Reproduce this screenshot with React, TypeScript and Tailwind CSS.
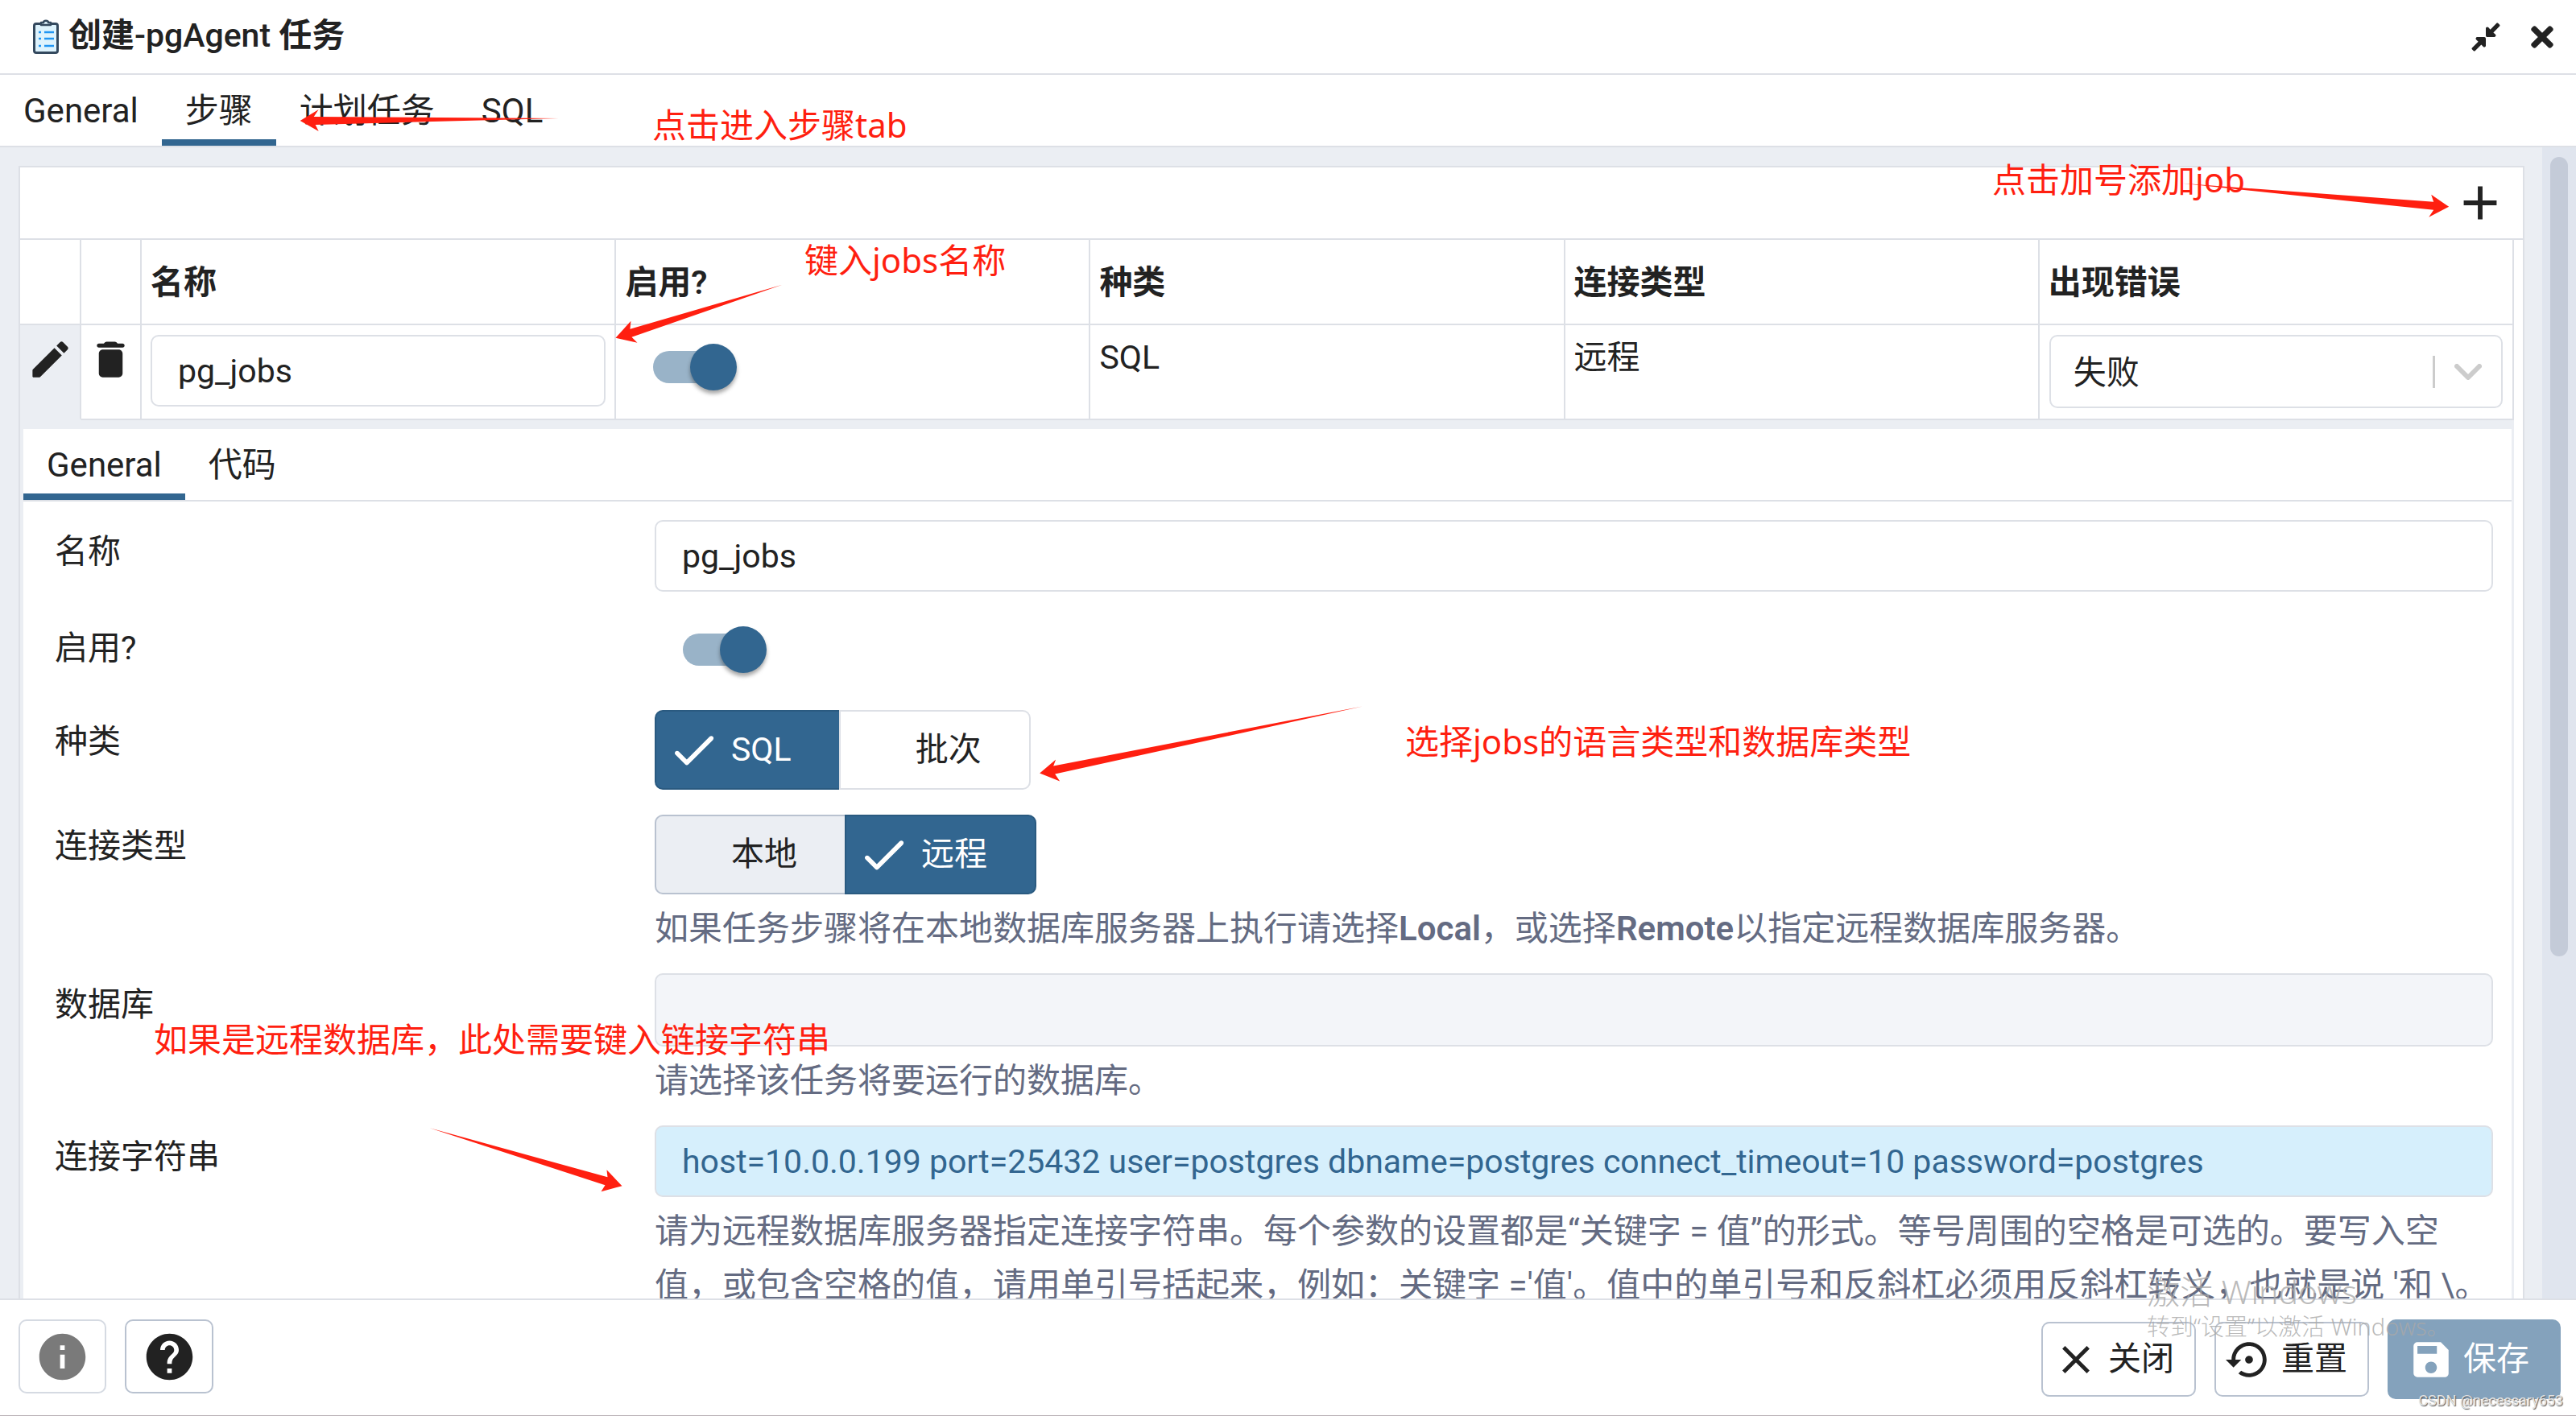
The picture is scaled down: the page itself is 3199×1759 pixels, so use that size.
import { useState } from 'react';
import type { ReactNode } from 'react';
import { MdAdd, MdClose, MdHelp, MdInfo, MdSave } from 'react-icons/md';
import { FaCompressAlt, FaTimes } from 'react-icons/fa';

const CONNECTION = 'host=10.0.0.199 port=25432 user=postgres dbname=postgres connect_timeout=10 password=postgres';

const inputClass =
  'block w-full h-[89px] rounded-[10px] border-2 border-[#dde0e6] bg-white px-8 text-[41px] text-[#222222] outline-none';

// drawn on top of the dialog: tail point, neck, barbs and tip of each arrow
const arrows = [
  '693,147 389,145 395,136 372,150 395,163 391,155',
  '971,354 782,409 783,399 764,420 791,426 784,419',
  '2711,228 3023,251 3020,242 3042,257 3017,270 3023,261',
  '1692,878 1308,952 1311,944 1291,961 1316,971 1310,962',
  '533,1402 754,1463 753,1454 772,1474 746,1481 751,1473',
];

function ClipboardIcon() {
  return (
    <svg className="w-8 h-[43px]" viewBox="0 0 32 43" fill="none">
      <rect x="1.5" y="5.500" width="29" height="36" rx="2.500" fill="#def3fd" stroke="#34495e" strokeWidth="3" />
      <path d="M10 7V4h3c0-3 6-3 6 0h3v3z" fill="#def3fd" stroke="#34495e" strokeWidth="2.500" strokeLinejoin="round" />
      <path d="M14 16h12M14 24h12M14 33h12M7 16h3M7 24h3M7 33h3" stroke="#2196f3" strokeWidth="2.500" />
    </svg>
  );
}

function EditIcon() {
  return (
    <svg className="w-[59px] h-[59px]" viewBox="0 0 24 24" fill="currentColor">
      <path d="M3 17.46v3.04c0 .28.22.5.5.5h3.04c.13 0 .26-.05.35-.15L17.81 9.94l-3.75-3.75L3.15 17.1c-.1.1-.15.22-.15.36zM20.71 7.04c.39-.39.39-1.02 0-1.41l-2.34-2.34c-.39-.39-1.02-.39-1.41 0l-1.83 1.83 3.75 3.75 1.83-1.83z" />
    </svg>
  );
}

function DeleteIcon() {
  return (
    <svg className="w-[59px] h-[59px]" viewBox="0 0 24 24" fill="currentColor">
      <path d="M6 19c0 1.1.9 2 2 2h8c1.1 0 2-.9 2-2V9c0-1.1-.9-2-2-2H8c-1.1 0-2 .9-2 2v10zM18 4h-2.5l-.71-.71c-.18-.18-.44-.29-.7-.29H9.91c-.26 0-.52.11-.7.29L8.5 4H6c-.55 0-1 .45-1 1s.45 1 1 1h12c.55 0 1-.45 1-1s-.45-1-1-1z" />
    </svg>
  );
}

function CheckIcon() {
  return (
    <svg className="w-full h-full" viewBox="0 0 24 24" fill="currentColor">
      <path d="M9 16.17 5.53 12.7c-.39-.39-1.02-.39-1.41 0s-.39 1.02 0 1.41l4.18 4.18c.39.39 1.02.39 1.41 0L20.29 7.71c.39-.39.39-1.02 0-1.41s-1.02-.39-1.41 0L9 16.17z" />
    </svg>
  );
}

function RestoreIcon() {
  return (
    <svg className="w-[58px] h-[58px]" viewBox="0 0 24 24" fill="currentColor">
      <path d="M14 12c0-1.1-.9-2-2-2s-2 .9-2 2 .9 2 2 2 2-.9 2-2zm-2-9c-4.970 0-9 4.030-9 9H0l4 4 4-4H5c0-3.870 3.130-7 7-7s7 3.130 7 7-3.130 7-7 7c-1.510 0-2.910-.49-4.060-1.300l-1.420 1.440C8.040 20.300 9.940 21 12 21c4.970 0 9-4.030 9-9s-4.030-9-9-9z" />
    </svg>
  );
}

function Tab({ active, onClick, children }: { active: boolean; onClick: () => void; children: ReactNode }) {
  return (
    <button
      type="button"
      role="tab"
      aria-selected={active}
      onClick={onClick}
      className={`px-[29px] pt-px h-[88px] text-[42px] ${active ? 'shadow-[inset_0_-8px_0_#326690]' : ''}`}
    >
      {children}
    </button>
  );
}

function Switch({ id, label, className = '' }: { id: string; label?: string; className?: string }) {
  return (
    <input
      id={id}
      type="checkbox"
      role="switch"
      defaultChecked
      aria-label={label}
      className={`block appearance-none relative w-[98px] h-10 rounded-full bg-[#99b3c8] before:absolute before:right-[-6px] before:top-[-9px] before:size-[58px] before:rounded-full before:bg-[#326690] before:shadow-[0_4px_5px_rgba(0,0,0,0.35)] ${className}`}
    />
  );
}

function Segmented({ options, value, onChange, muted }: { options: string[]; value: string; onChange: (v: string) => void; muted?: boolean }) {
  return (
    <div className="flex" role="group">
      {options.map((option) => {
        const active = option === value;
        const idle = muted ? 'bg-[#ebeef3] border-[#b9c2d0]' : 'bg-white border-[#dde0e6]';
        return (
          <button
            key={option}
            type="button"
            aria-pressed={active}
            onClick={() => onChange(option)}
            className={`flex items-center gap-3 h-[99px] pl-3 pr-[59px] border-2 text-[41px] first:rounded-l-[10px] first:border-r-0 last:rounded-r-[10px] ${
              active ? 'bg-[#326690] border-[#2a5a80] text-white' : idle
            }`}
          >
            <span className="size-[69px]">{active && <CheckIcon />}</span>
            {option}
          </button>
        );
      })}
    </div>
  );
}

function Field({ id, label, hint, children }: { id?: string; label: string; hint?: ReactNode; children: ReactNode }) {
  return (
    <div className="grid grid-cols-[1fr_3fr]">
      <label htmlFor={id} className="pl-4 pt-2 leading-[62px]">
        {label}
      </label>
      <div className={hint ? '' : 'pb-[9px]'}>
        {children}
        {hint && <p className="mt-[9px] text-[42px] leading-[67px] text-[#646b82]">{hint}</p>}
      </div>
    </div>
  );
}

function Note({ className, children }: { className: string; children: ReactNode }) {
  return <span className={`absolute whitespace-nowrap leading-[60px] text-[#ff1f10] ${className}`}>{children}</span>;
}

export default function App() {
  const [tab, setTab] = useState('步骤');
  const [stepTab, setStepTab] = useState('General');
  const [kind, setKind] = useState('SQL');
  const [connType, setConnType] = useState('远程');

  return (
    <div className="relative flex flex-col h-screen overflow-hidden bg-white border-b border-[#b9b0b5] text-[41px] text-[#222222] font-[family-name:Roboto,'Noto_Sans_CJK_SC',sans-serif]">
      <header className="flex items-center h-[93px] shrink-0 border-b-2 border-[#dde0e6] pl-[41px] pr-7">
        <ClipboardIcon />
        <h1 className="ml-3 mb-1 font-bold leading-[60px]">
          创建<span className="font-medium">-pgAgent</span> 任务
        </h1>
        <div className="ml-auto flex items-center gap-9">
          <button type="button" aria-label="还原">
            <FaCompressAlt className="size-10" />
          </button>
          <button type="button" aria-label="关闭窗口">
            <FaTimes className="w-7 h-10" />
          </button>
        </div>
      </header>

      <div className="flex h-[90px] shrink-0 border-b-2 border-[#dde0e6]" role="tablist">
        {['General', '步骤', '计划任务', 'SQL'].map((name) => (
          <Tab key={name} active={tab === name} onClick={() => setTab(name)}>
            {name}
          </Tab>
        ))}
      </div>

      <div className="flex flex-1 min-h-0 bg-[#ebeef3]">
        <main className="flex-1 min-w-0 overflow-hidden pt-[23px] pl-[23px] pr-[22px]">
          <section className="border-2 border-[#dde0e6] bg-white">
            <div className="flex items-center justify-end h-[90px] border-b-2 border-[#dde0e6] pr-[18px]">
              <button type="button" aria-label="添加">
                <MdAdd className="size-[70px]" />
              </button>
            </div>

            <div className="mr-[11px]">
              <table className="w-full table-fixed border-separate border-spacing-0 text-left">
                <colgroup>
                  <col className="w-[76px]" />
                  <col className="w-[75px]" />
                  <col />
                  <col />
                  <col />
                  <col />
                  <col />
                </colgroup>
                <thead>
                  <tr className="h-[106px]">
                    {['', '', '名称', '启用?', '种类', '连接类型', '出现错误'].map((title, i) => (
                      <th key={i} className="border-r-2 border-b-2 border-[#dde0e6] px-[11px] pt-1 font-semibold">
                        {title}
                      </th>
                    ))}
                  </tr>
                </thead>
                <tbody>
                  <tr className="h-[118px] align-top">
                    <td className="border-r-2 border-b-2 border-r-[#dde0e6] border-b-[#ebeef3] bg-[#ebeef3] pt-[13px] pl-2">
                      <button type="button" aria-label="编辑" className="block">
                        <EditIcon />
                      </button>
                    </td>
                    <td className="border-r-2 border-b-2 border-[#dde0e6] pt-[13px] pl-[7px]">
                      <button type="button" aria-label="删除" className="block">
                        <DeleteIcon />
                      </button>
                    </td>
                    <td className="border-r-2 border-b-2 border-[#dde0e6] px-[11px] pt-3">
                      <input aria-label="名称" defaultValue="pg_jobs" className={inputClass} />
                    </td>
                    <td className="border-r-2 border-b-2 border-[#dde0e6]">
                      <Switch id="row-enabled" label="启用?" className="mt-8 ml-[46px]" />
                    </td>
                    <td className="border-r-2 border-b-2 border-[#dde0e6] px-[11px] pt-3 leading-[56px]">{kind}</td>
                    <td className="border-r-2 border-b-2 border-[#dde0e6] px-[11px] pt-3 leading-[56px]">{connType}</td>
                    <td className="border-r-2 border-b-2 border-[#dde0e6] px-3 pt-3">
                      <div className="relative">
                        <select
                          aria-label="出现错误"
                          className="block w-full h-[91px] appearance-none rounded-[10px] border-2 border-[#dde0e6] bg-white pt-1 pl-7 text-[41px]"
                        >
                          <option>失败</option>
                          <option>成功</option>
                          <option>忽略</option>
                        </select>
                        <span className="absolute right-[26px] inset-y-0 flex items-center gap-6 pointer-events-none">
                          <span className="w-[3px] h-10 bg-[#cccccc]" />
                          <svg className="w-[34px] h-5" viewBox="0 0 34 20" fill="none" stroke="#cccccc" strokeWidth="6" strokeLinecap="round" strokeLinejoin="round">
                            <path d="M3 3l14 14L31 3" />
                          </svg>
                        </span>
                      </div>
                    </td>
                  </tr>
                </tbody>
              </table>

              <div className="bg-[#ebeef3] pt-[11px] pl-1 pr-[3px]">
                <div className="bg-white">
                  <div className="flex h-[90px] border-b-2 border-[#dde0e6]" role="tablist">
                    {['General', '代码'].map((name) => (
                      <Tab key={name} active={stepTab === name} onClick={() => setStepTab(name)}>
                        {name}
                      </Tab>
                    ))}
                  </div>

                  <form className="flex flex-col gap-[22px] px-[23px] pt-[23px] pb-10">
                    <Field id="name" label="名称">
                      <input id="name" defaultValue="pg_jobs" className={inputClass} />
                    </Field>
                    <Field id="enabled" label="启用?">
                      <div className="h-[85px] pt-[21px] pl-[35px]">
                        <Switch id="enabled" />
                      </div>
                    </Field>
                    <Field label="种类">
                      <Segmented options={['SQL', '批次']} value={kind} onChange={setKind} />
                    </Field>
                    <Field
                      label="连接类型"
                      hint={
                        <>
                          如果任务步骤将在本地数据库服务器上执行请选择<b className="font-semibold">Local</b>，或选择
                          <b className="font-semibold">Remote</b>以指定远程数据库服务器。
                        </>
                      }
                    >
                      <Segmented options={['本地', '远程']} value={connType} onChange={setConnType} muted />
                    </Field>
                    <Field id="database" label="数据库" hint="请选择该任务将要运行的数据库。">
                      <input id="database" disabled className="block w-full h-[91px] rounded-[10px] border-2 border-[#dde0e6] bg-[#f3f5f9]" />
                    </Field>
                    <Field
                      id="connstr"
                      label="连接字符串"
                      hint="请为远程数据库服务器指定连接字符串。每个参数的设置都是“关键字 = 值”的形式。等号周围的空格是可选的。要写入空值，或包含空格的值，请用单引号括起来，例如：关键字 ='值'。值中的单引号和反斜杠必须用反斜杠转义，也就是说 '和 \。"
                    >
                      <input
                        id="connstr"
                        defaultValue={CONNECTION}
                        className="block w-full h-[89px] rounded-[10px] border-2 border-[#dde0e6] bg-[#d6effc] px-8 text-[41px] text-[#326690] outline-none"
                      />
                    </Field>
                  </form>
                </div>
              </div>
            </div>
          </section>
        </main>

        <div className="w-[42px] shrink-0 bg-[#e0e5ee] pt-3 px-2.5">
          <div className="h-[70%] rounded-full bg-[#c4cbd8]" />
        </div>
      </div>

      <footer className="flex items-start h-[145px] shrink-0 border-t-2 border-[#dde0e6] pt-6 pl-[23px] pr-[19px]">
        <button type="button" aria-label="信息" disabled className="flex items-center justify-center w-[109px] h-[92px] rounded-[10px] border-2 border-[#d5dae2] text-[#7a7a7a]">
          <MdInfo className="size-[69px]" />
        </button>
        <button type="button" aria-label="帮助" className="ml-[23px] flex items-center justify-center w-[110px] h-[92px] rounded-[10px] border-2 border-[#b9c2d0]">
          <MdHelp className="size-[69px]" />
        </button>
        <div className="ml-auto flex items-center gap-[23px]">
          <button type="button" className="flex items-center gap-[11px] h-[93px] pl-3 pr-[25px] rounded-[10px] border-2 border-[#b9c2d0]">
            <MdClose className="size-[58px]" />
            关闭
          </button>
          <button type="button" className="flex items-center gap-[11px] h-[93px] pl-3 pr-[25px] rounded-[10px] border-2 border-[#b9c2d0]">
            <RestoreIcon />
            重置
          </button>
          <button type="button" disabled className="flex items-center gap-[11px] h-[99px] pl-[25px] pr-[39px] rounded-[10px] bg-[#84a2bc] text-white">
            <MdSave className="size-[58px]" />
            保存
          </button>
        </div>
      </footer>

      <div className="absolute inset-0 pointer-events-none text-[42px] font-[family-name:'Noto_Sans','Noto_Sans_CJK_SC',sans-serif]">
        <svg className="absolute inset-0 w-full h-full" viewBox="0 0 3199 1759" fill="#ff1f10">
          {arrows.map((points) => (
            <polygon key={points} points={points} />
          ))}
        </svg>
        <Note className="left-[810px] top-[125px]">点击进入步骤tab</Note>
        <Note className="left-[999px] top-[293px]">键入jobs名称</Note>
        <Note className="left-[2474px] top-[193px]">点击加号添加job</Note>
        <Note className="left-[1745px] top-[891px]">选择jobs的语言类型和数据库类型</Note>
        <Note className="left-[191px] top-[1261px]">如果是远程数据库，此处需要键入链接字符串</Note>
        <div className="absolute left-[2666px] bottom-[88px] font-light text-[#a8a8a8]/80 whitespace-nowrap">
          <p className="text-[41px] leading-[44px]">激活 Windows</p>
          <p className="text-[29px] leading-[44px]">转到“设置”以激活 Windows。</p>
        </div>
        <span className="absolute right-4 bottom-1 text-[18px] leading-[28px] text-[#e4e4e4] [text-shadow:1px_1px_1px_#555555] font-[family-name:Roboto,sans-serif]">
          CSDN @necessary653
        </span>
      </div>
    </div>
  );
}
